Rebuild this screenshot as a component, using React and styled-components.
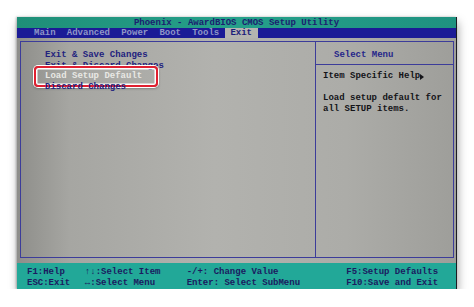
import React from 'react';
import styled, { createGlobalStyle } from 'styled-components';

const GlobalStyle = createGlobalStyle`
  body {
    margin: 0;
    background: #ffffff;
    font-family: 'Liberation Mono', 'DejaVu Sans Mono', monospace;
  }
`;

const menus = ['Main', 'Advanced', 'Power', 'Boot', 'Tools', 'Exit'];
const exitItems = ['Exit & Save Changes', 'Exit & Discard Changes', 'Load Setup Default', 'Discard Changes'];
const footerCols = [
  ['F1:Help', 'ESC:Exit'],
  ['\u2191\u2193:Select Item', '\u2194:Select Menu'],
  ['-/+: Change Value', 'Enter: Select SubMenu'],
  ['F5:Setup Defaults', 'F10:Save and Exit'],
];

function App() {
  return (
    <>
      <GlobalStyle />
      <Page>
        <Screen>
          <TitleBar>Phoenix - AwardBIOS CMOS Setup Utility</TitleBar>
          <MenuBar>
            {menus.map((m) => (
              <MenuItem key={m} $active={m === 'Exit'}>{m}</MenuItem>
            ))}
          </MenuBar>
          <Body>
            <Panel>
              <ItemList>
                {exitItems.map((item) => (
                  <Item key={item} $selected={item === 'Load Setup Default'}>{item}</Item>
                ))}
              </ItemList>
              <HelpPane>
                <HelpHeader>Select Menu</HelpHeader>
                <HelpBody>
                  <HelpTitle>Item Specific Help<Arrow /></HelpTitle>
                  <HelpText>Load setup default for{'\n'}all SETUP items.</HelpText>
                </HelpBody>
              </HelpPane>
            </Panel>
          </Body>
          <Footer>
            {footerCols.map((col, i) => (
              <FooterCol key={i} $width={[58, 102, 160, 110][i]}>
                {col.map((line) => <div key={line}>{line}</div>)}
              </FooterCol>
            ))}
          </Footer>
        </Screen>
      </Page>
    </>
  );
}

const Page = styled.div`
  padding: 17px 0 0 17px;
`;

const Screen = styled.div`
  width: 439px;
  display: flex;
  flex-direction: column;
  font-family: 'Liberation Mono', 'DejaVu Sans Mono', monospace;
  font-size: 9px;
  font-weight: bold;
  border-right: 1px solid #1c1c22;
  box-shadow: 1px 5px 9px rgba(0, 0, 0, 0.35), -1px 0 2px rgba(0, 0, 0, 0.25);
`;

const TitleBar = styled.div`
  height: 11px;
  line-height: 12px;
  text-align: center;
  color: #1b2070;
  background: linear-gradient(90deg, #1f8f78, #25a08a 50%, #1f9280);
`;

const MenuBar = styled.div`
  height: 10px;
  display: flex;
  align-items: center;
  padding-left: 11.4px;
  background: #1b1b96;
`;

const MenuItem = styled.div`
  padding: 0 5.6px;
  height: 10px;
  line-height: 10px;
  color: ${(p) => (p.$active ? '#1c1c7a' : '#8f96c6')};
  background: ${(p) => (p.$active ? '#b4b4b0' : 'transparent')};
`;

const Body = styled.div`
  height: 225px;
  padding: 3px 2px 5px 3px;
  box-sizing: border-box;
  background: linear-gradient(90deg, #8e8e8a, #a6a6a2 12%, #b2b2ae 45%, #acaca8 75%, #9e9e9a);
`;

const Panel = styled.div`
  height: 100%;
  box-sizing: border-box;
  border: 1px solid #3c3c9a;
  display: grid;
  grid-template-columns: 294px 1fr;
`;

const ItemList = styled.div`
  padding: 8px 0 0 24px;
  display: flex;
  flex-direction: column;
  align-items: flex-start;
`;

const Item = styled.div`
  position: relative;
  height: 10.6px;
  line-height: 11px;
  color: ${(p) => (p.$selected ? '#e8e8e4' : '#22227e')};
  &::after {
    content: '';
    display: ${(p) => (p.$selected ? 'block' : 'none')};
    position: absolute;
    left: -11px;
    right: -16px;
    top: -5px;
    bottom: -5px;
    border: 2px solid #e02030;
    border-radius: 4px;
    box-shadow: inset 0 0 0 1.5px #ffffff, 0 0 0 1px #ffffff, 0 1px 3px rgba(0, 0, 0, 0.5);
  }
`;

const HelpPane = styled.div`
  border-left: 1px solid #3c3c9a;
  display: flex;
  flex-direction: column;
`;

const HelpHeader = styled.div`
  height: 23px;
  padding: 8px 0 0 18px;
  box-sizing: border-box;
  line-height: 11px;
  color: #26268a;
  border-bottom: 1px solid #3c3c9a;
`;

const HelpBody = styled.div`
  padding: 6px 0 0 7px;
  color: #141418;
  line-height: 11px;
`;

const HelpTitle = styled.div`
  display: flex;
  align-items: center;
`;

const Arrow = styled.span`
  width: 0;
  height: 0;
  border-top: 3px solid transparent;
  border-bottom: 3px solid transparent;
  border-left: 4px solid #141418;
`;

const HelpText = styled.div`
  margin-top: 11px;
  white-space: pre;
`;

const Footer = styled.div`
  height: 26px;
  box-sizing: border-box;
  padding: 4px 0 0 10px;
  display: flex;
  line-height: 11px;
  color: #1b1b60;
  background: #22a898;
  white-space: pre;
`;

const FooterCol = styled.div`
  width: ${(p) => p.$width}px;
`;

export default App;
